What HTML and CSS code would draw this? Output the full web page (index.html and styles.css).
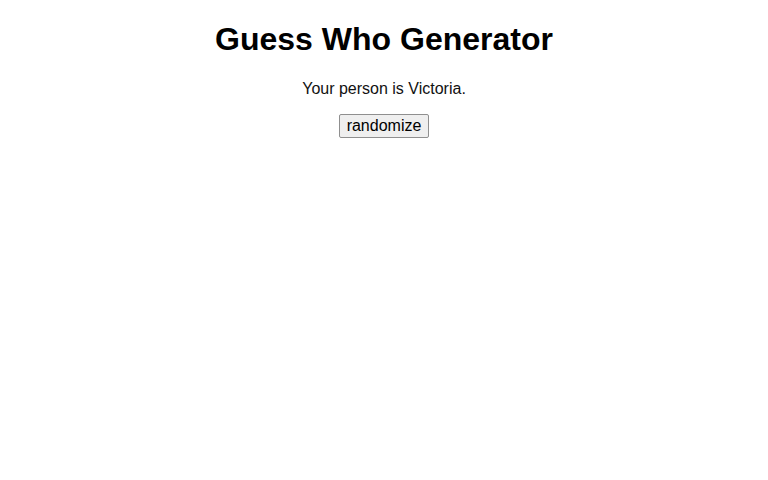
FILE: index.html
```html
<!DOCTYPE html>
<html>
<head>
<meta charset="utf-8">
<link rel="stylesheet" href="styles.css">
</head>
<body class="page">
<h1 class="title">Guess Who Generator</h1>
<p class="result">Your person is Victoria.</p>
<button class="btn">randomize</button>
</body>
</html>
```

FILE: styles.css
```css
.page {
  margin: 0;
  font-family: "Liberation Sans", Arial, sans-serif;
  text-align: center;
  color: #000;
  background: #fff;
}
.title {
  font-size: 32px;
  font-weight: bold;
  margin: 21px 0 22px;
}
.result {
  font-size: 16px;
  margin: 16px 0;
  color: #111;
}
.btn {
  font-family: "Liberation Sans", Arial, sans-serif;
  font-size: 16px;
  padding: 2px 7px;
  border: 1px solid #8f8f8f;
  border-radius: 2px;
  background: #efefef;
  color: #000;
}
```
